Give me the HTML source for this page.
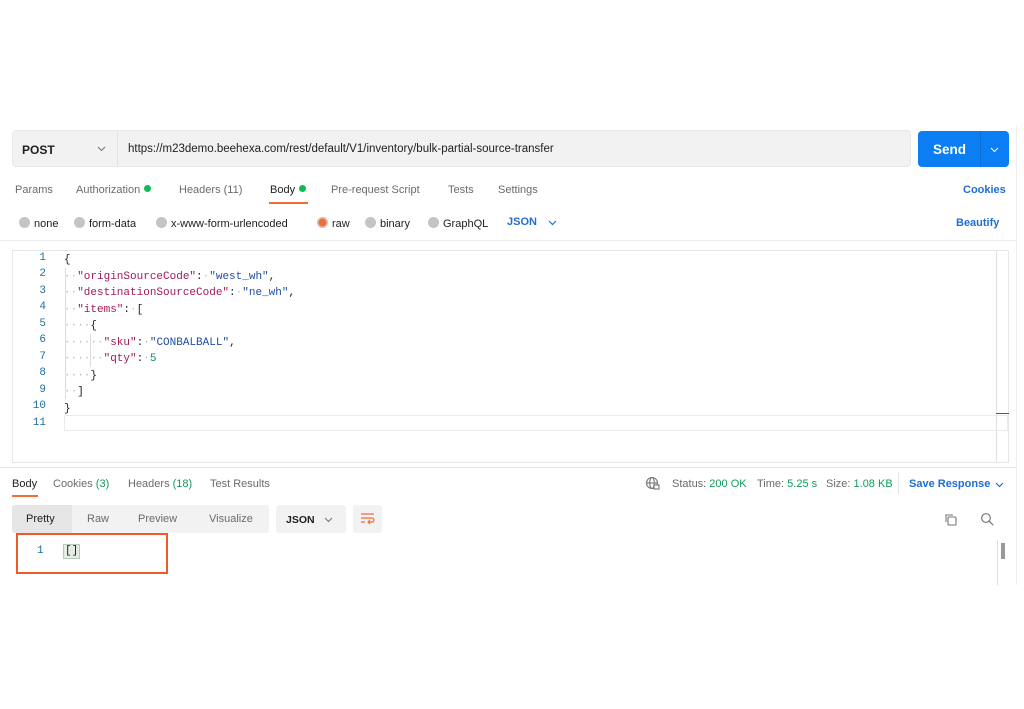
<!DOCTYPE html>
<html><head><meta charset="utf-8"><style>
*{margin:0;padding:0;box-sizing:border-box}
body{width:1024px;height:709px;background:#fff;position:relative;overflow:hidden;font-family:"Liberation Sans",sans-serif;font-size:11px;color:#212121}
.a{position:absolute;white-space:nowrap}
.g{color:#6b6b6b}
.dot{display:inline-block;width:7px;height:7px;border-radius:50%;background:#0cbb52;margin-left:4px;vertical-align:1px}
.rad{display:inline-block;width:11px;height:11px;border-radius:50%;background:#c4c4c4;vertical-align:-1px;margin-right:4px}
.code{font-family:"Liberation Mono",monospace;font-size:11px}
.ln{position:absolute;left:20px;width:26px;text-align:right;color:#1f6ea3;font-family:"Liberation Mono",monospace;font-size:11px}
.k{color:#a3195b}.s{color:#1f4ea3}.n{color:#0f8c6c}.p{color:#bbb}
.chev{position:absolute}
</style></head><body>
<div class="a" style="left:12px;top:130px;width:899px;height:37px;background:#f2f2f2;border:1px solid #e8e8e8;border-radius:4px"></div>
<div class="a" style="left:117px;top:131px;width:1px;height:35px;background:#e2e2e2"></div>
<div class="a" style="left:22px;top:143px;font-weight:bold;font-size:12px">POST</div>
<svg class="chev" style="left:97px;top:146px" width="9" height="6" viewBox="0 0 9 6" fill="none" stroke="#777" stroke-width="1.1"><path d="M1 1l3.5 3.5L8 1"/></svg>
<div class="a" style="left:128px;top:143px;font-size:11.5px">https://m23demo.beehexa.com/rest/default/V1/inventory/bulk-partial-source-transfer</div>
<div class="a" style="left:918px;top:131px;width:91px;height:36px;background:#0a7ef2;border-radius:4px"></div>
<div class="a" style="left:980px;top:131px;width:1px;height:36px;background:#0b6fd2"></div>
<div class="a" style="left:933px;top:142px;color:#fff;font-weight:bold;font-size:13.5px">Send</div>
<svg class="chev" style="left:990px;top:147px" width="9" height="6" viewBox="0 0 9 6" fill="none" stroke="#fff" stroke-width="1.1"><path d="M1 1l3.5 3.5L8 1"/></svg>
<div class="a" style="left:1016px;top:125px;width:1px;height:460px;background:#eee"></div>

<div class="a g" style="left:15px;top:184px">Params</div>
<div class="a g" style="left:76px;top:184px">Authorization<span class="dot"></span></div>
<div class="a g" style="left:179px;top:184px">Headers (11)</div>
<div class="a" style="left:270px;top:184px">Body<span class="dot"></span></div>
<div class="a" style="left:269px;top:202px;width:39px;height:2px;background:#f26b3a"></div>
<div class="a g" style="left:331px;top:184px">Pre-request Script</div>
<div class="a g" style="left:448px;top:184px">Tests</div>
<div class="a g" style="left:498px;top:184px">Settings</div>
<div class="a" style="left:963px;top:184px;color:#1f6ed4;font-weight:bold">Cookies</div>

<div class="a" style="left:19px;top:217px"><span class="rad"></span>none</div>
<div class="a" style="left:74px;top:217px"><span class="rad"></span>form-data</div>
<div class="a" style="left:156px;top:217px"><span class="rad"></span>x-www-form-urlencoded</div>
<div class="a" style="left:317px;top:217px"><span class="rad" style="background:#f26b3a;box-shadow:0 0 0 1.5px #e6c2b4 inset"></span>raw</div>
<div class="a" style="left:365px;top:217px"><span class="rad"></span>binary</div>
<div class="a" style="left:428px;top:217px"><span class="rad"></span>GraphQL</div>
<div class="a" style="left:507px;top:216px;color:#1f6ed4;font-weight:bold">JSON</div>
<svg class="chev" style="left:548px;top:220px" width="9" height="6" viewBox="0 0 9 6" fill="none" stroke="#1f6ed4" stroke-width="1.2"><path d="M1 1l3.5 3.5L8 1"/></svg>
<div class="a" style="left:956px;top:217px;color:#1f6ed4;font-weight:bold">Beautify</div>
<div class="a" style="left:0;top:240px;width:1016px;height:1px;background:#eee"></div>

<div class="a" style="left:12px;top:250px;width:997px;height:213px;border:1px solid #e6e6e6"></div>
<div class="a" style="left:996px;top:251px;width:1px;height:211px;background:#e0e0e0"></div>
<div class="a" style="left:996px;top:413px;width:13px;height:1px;background:#555"></div>
<div class="a" style="left:64px;top:415px;width:944px;height:16px;border:1px solid #eaeaea"></div>
<div class="a" style="left:65px;top:268px;width:1px;height:131px;background:#ddd"></div>
<div class="a" style="left:90px;top:334px;width:1px;height:33px;background:#ddd"></div>
<div class="ln" style="top:252px">1</div><div class="ln" style="top:268px">2</div><div class="ln" style="top:285px">3</div><div class="ln" style="top:301px">4</div><div class="ln" style="top:318px">5</div><div class="ln" style="top:334px">6</div><div class="ln" style="top:351px">7</div><div class="ln" style="top:367px">8</div><div class="ln" style="top:384px">9</div><div class="ln" style="top:400px">10</div><div class="ln" style="top:417px">11</div>
<div class="a code" style="left:64px;top:252px;line-height:16.5px;white-space:pre">{
<span class="p">··</span><span class="k">"originSourceCode"</span>:<span class="p">·</span><span class="s">"west_wh"</span>,
<span class="p">··</span><span class="k">"destinationSourceCode"</span>:<span class="p">·</span><span class="s">"ne_wh"</span>,
<span class="p">··</span><span class="k">"items"</span>:<span class="p">·</span>[
<span class="p">····</span>{
<span class="p">······</span><span class="k">"sku"</span>:<span class="p">·</span><span class="s">"CONBALBALL"</span>,
<span class="p">······</span><span class="k">"qty"</span>:<span class="p">·</span><span class="n">5</span>
<span class="p">····</span>}
<span class="p">··</span>]
}</div>

<div class="a" style="left:0;top:467px;width:1016px;height:1px;background:#e6e6e6"></div>
<div class="a" style="left:12px;top:478px">Body</div>
<div class="a" style="left:12px;top:495px;width:26px;height:2px;background:#f26b3a"></div>
<div class="a g" style="left:53px;top:478px">Cookies <span style="color:#0f9c5c">(3)</span></div>
<div class="a g" style="left:128px;top:478px">Headers <span style="color:#0f9c5c">(18)</span></div>
<div class="a g" style="left:210px;top:478px">Test Results</div>
<svg class="a" style="left:645px;top:476px" width="16" height="16" viewBox="0 0 16 16" fill="none" stroke="#777" stroke-width="1.1"><circle cx="7" cy="7" r="5.5"/><ellipse cx="7" cy="7" rx="2.3" ry="5.5"/><path d="M1.5 7h11"/><rect x="9" y="9" width="5" height="4" fill="#fff"/></svg>
<div class="a g" style="left:672px;top:478px">Status: <span style="color:#0f9c5c">200 OK</span></div>
<div class="a g" style="left:757px;top:478px">Time: <span style="color:#0f9c5c">5.25 s</span></div>
<div class="a g" style="left:826px;top:478px">Size: <span style="color:#0f9c5c">1.08 KB</span></div>
<div class="a" style="left:898px;top:472px;width:1px;height:22px;background:#e6e6e6"></div>
<div class="a" style="left:909px;top:478px;color:#1f6ed4;font-weight:bold">Save Response</div>
<svg class="chev" style="left:995px;top:482px" width="9" height="6" viewBox="0 0 9 6" fill="none" stroke="#1f6ed4" stroke-width="1.2"><path d="M1 1l3.5 3.5L8 1"/></svg>

<div class="a" style="left:12px;top:505px;width:257px;height:28px;background:#f2f2f2;border-radius:3px"></div>
<div class="a" style="left:12px;top:505px;width:60px;height:28px;background:#e6e6e6;border-radius:3px 0 0 3px"></div>
<div class="a" style="left:26px;top:513px">Pretty</div>
<div class="a g" style="left:87px;top:513px">Raw</div>
<div class="a g" style="left:138px;top:513px">Preview</div>
<div class="a g" style="left:209px;top:513px">Visualize</div>
<div class="a" style="left:276px;top:505px;width:70px;height:28px;background:#f2f2f2;border-radius:3px"></div>
<div class="a" style="left:286px;top:514px;font-weight:bold;font-size:10.5px">JSON</div>
<svg class="chev" style="left:324px;top:517px" width="9" height="6" viewBox="0 0 9 6" fill="none" stroke="#777" stroke-width="1.1"><path d="M1 1l3.5 3.5L8 1"/></svg>
<div class="a" style="left:353px;top:505px;width:29px;height:28px;background:#f2f2f2;border-radius:3px"></div>
<svg class="a" style="left:360px;top:512px" width="15" height="14" viewBox="0 0 15 14" fill="none" stroke="#f26b3a" stroke-width="1.2"><path d="M1 2h13M1 6h11a2 2 0 0 1 0 4H8M10 8l-2 2 2 2M1 10h4"/></svg>
<svg class="a" style="left:943px;top:512px" width="16" height="16" viewBox="0 0 16 16" fill="none" stroke="#777" stroke-width="1.1"><rect x="5" y="5" width="8" height="8" rx="1"/><path d="M3 10V3h7"/></svg>
<svg class="a" style="left:980px;top:512px" width="15" height="15" viewBox="0 0 15 15" fill="none" stroke="#777" stroke-width="1.2"><circle cx="6" cy="6" r="4.3"/><path d="M9.2 9.2l4 4"/></svg>

<div class="a" style="left:16px;top:533px;width:152px;height:41px;border:2px solid #f05a28"></div>
<div class="a code" style="left:37px;top:545px;color:#1f6ea3">1</div>
<div class="a code" style="left:63px;top:544px;background:#e4ece4;border:1px solid #b8c8b8;padding:0 1px;line-height:13px">[]</div>
<div class="a" style="left:997px;top:540px;width:1px;height:45px;background:#e0e0e0"></div>
<div class="a" style="left:1001px;top:543px;width:4px;height:16px;background:#999"></div>
</body></html>
